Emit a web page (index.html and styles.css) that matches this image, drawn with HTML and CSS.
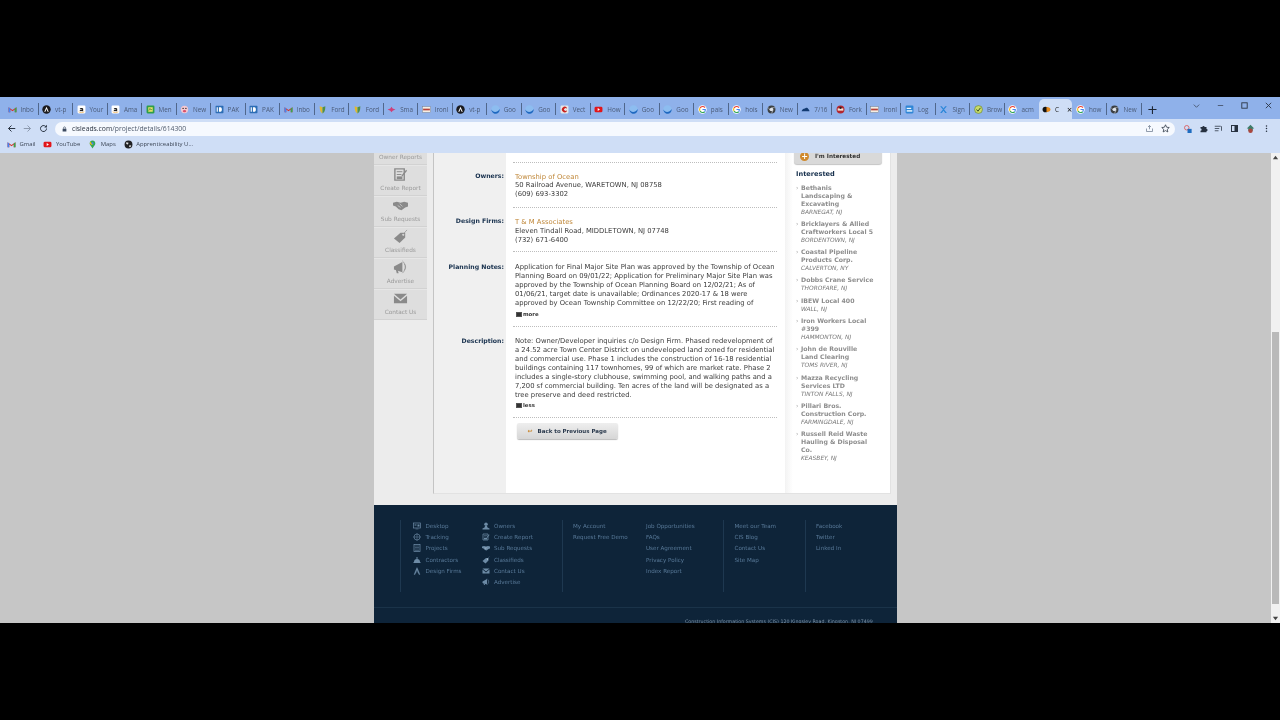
FILE: index.html
```html
<!DOCTYPE html>
<html lang="en">
<head>
<meta charset="utf-8">
<title>CIS project details</title>
<link rel="stylesheet" href="styles.css">
</head>
<body>
<svg class="defs" xmlns="http://www.w3.org/2000/svg">
  <symbol id="gmail" viewBox="0 0 16 16"><path d="M1 13V4l7 5 7-5v9h-3V8l-4 3-4-3v5z" fill="#d93025"/><path d="M1 13V4l3 2v7z" fill="#4285f4"/><path d="M15 13V4l-3 2v7z" fill="#34a853"/></symbol>
  <symbol id="ang" viewBox="0 0 16 16"><circle cx="8" cy="8" r="7.5" fill="#1b1b1f"/><path d="M8 3l4 9h-2L8 7l-2 5H4z" fill="#fff"/></symbol>
  <symbol id="amz" viewBox="0 0 16 16"><rect x="1" y="1" width="14" height="14" rx="2" fill="#fff"/><path d="M5 7c0-2 6-2 6 0v4H9V10c-2 2-5 1-4-1 1-1 3-1 4-1V7H5z" fill="#222"/><path d="M3 12c3 2 7 2 10 0" stroke="#f09a1a" fill="none"/></symbol>
  <symbol id="men" viewBox="0 0 16 16"><rect x="1" y="1" width="14" height="14" rx="2" fill="#2e9e48"/><rect x="4" y="4" width="8" height="8" fill="#e8e36a"/><path d="M5 10l2-4 2 3 2-2" stroke="#1c6a30" fill="none"/></symbol>
  <symbol id="pig" viewBox="0 0 16 16"><circle cx="8" cy="8" r="6.5" fill="#f3c7d0"/><circle cx="5.5" cy="6" r="1.2" fill="#222"/><circle cx="10.5" cy="6" r="1.2" fill="#222"/><ellipse cx="8" cy="11" rx="3" ry="2" fill="#d8506a"/></symbol>
  <symbol id="id" viewBox="0 0 16 16"><rect x="1" y="1.5" width="14" height="13" rx="1" fill="#2c6db5"/><rect x="3" y="4" width="2" height="8" fill="#fff"/><path d="M7 4h3c3 0 3 8 0 8H7z" fill="#fff"/></symbol>
  <symbol id="shield" viewBox="0 0 16 16"><path d="M3 2l5 2v11C5 13 3 10 3 2z" fill="#e2b92e"/><path d="M13 2L8 4v11c3-2 5-5 5-13z" fill="#4f8f4a"/></symbol>
  <symbol id="sma" viewBox="0 0 16 16"><path d="M1 8l5-2 2-3 2 3 5 2-5 2-2 3-2-3z" fill="#cf3f77"/></symbol>
  <symbol id="flag" viewBox="0 0 16 16"><rect x="1" y="3" width="14" height="10" fill="#f4efe4" stroke="#777" stroke-width=".7"/><rect x="2" y="6.5" width="12" height="3" fill="#b8413a"/></symbol>
  <symbol id="globe" viewBox="0 0 16 16"><circle cx="8" cy="8" r="7.5" fill="#8dbdf0"/><path d="M.5 8c3 6 11 6 15-1 0 6-4 8.500-7.500 8.500S.5 12 .5 8z" fill="#1f68c0"/></symbol>
  <symbol id="vec" viewBox="0 0 16 16"><rect x="1" y="1" width="14" height="14" rx="2" fill="#e7e7e7"/><path d="M12 4.500A5 5 0 1 0 12 11.500V9A2.500 2.500 0 1 1 12 7z" fill="#c9211e"/></symbol>
  <symbol id="yt" viewBox="0 0 16 16"><rect x="1" y="3" width="14" height="10" rx="2.500" fill="#e1161b"/><path d="M6.500 5.500l4 2.500-4 2.500z" fill="#fff"/></symbol>
  <symbol id="goog" viewBox="0 0 16 16"><circle cx="8" cy="8" r="7.500" fill="#fff"/><path d="M12.500 4.500A5.500 5.500 0 0 0 3.500 5.500" stroke="#ea4335" stroke-width="2" fill="none"/><path d="M3.500 5.500a5.500 5.500 0 0 0 0 5" stroke="#fbbc05" stroke-width="2" fill="none"/><path d="M3.500 10.500a5.500 5.500 0 0 0 8.500 1.500" stroke="#34a853" stroke-width="2" fill="none"/><path d="M8 8h5c0 2-.5 3-1 4" stroke="#4285f4" stroke-width="2" fill="none"/></symbol>
  <symbol id="chrome" viewBox="0 0 16 16"><circle cx="8" cy="8" r="7" fill="#3c4043"/><circle cx="8" cy="8" r="3.200" fill="#dfe3ea"/><path d="M8 4.800h6M5.200 9.600L2.500 4.500M10.800 9.600L8 15" stroke="#dfe3ea"/></symbol>
  <symbol id="cloud" viewBox="0 0 16 16"><path d="M1 11c1-3 3-5 6-5 2-2 5-1 6 1 1 1 2 2 2 4z" fill="#123a72"/></symbol>
  <symbol id="fork" viewBox="0 0 16 16"><circle cx="8" cy="8" r="7" fill="#b3262e"/><rect x="3" y="6" width="10" height="4" fill="#f0e4d8"/><circle cx="8" cy="5" r="2" fill="#222"/></symbol>
  <symbol id="log" viewBox="0 0 16 16"><rect x="1" y="1" width="14" height="14" rx="2" fill="#2f86d6"/><rect x="3" y="5" width="8" height="2" fill="#fff"/><rect x="3" y="9" width="10" height="3" fill="#cfe6fa"/></symbol>
  <symbol id="x" viewBox="0 0 16 16"><path d="M2 2l5 6-5 6h3l3-4 3 4h3L9 8l5-6h-3L8 6 5 2z" fill="#2a86d8"/></symbol>
  <symbol id="brow" viewBox="0 0 16 16"><circle cx="8" cy="8" r="7" fill="#c9dc6a" stroke="#5b7b2e"/><path d="M4.500 8l2.500 3 4.500-6" stroke="#24401c" stroke-width="1.600" fill="none"/></symbol>
  <symbol id="cis" viewBox="0 0 16 16"><circle cx="6" cy="8" r="5" fill="#111"/><path d="M8 3.500c5 0 7 2 7 4.500s-2 4.500-7 4.500z" fill="#e88c1d"/></symbol>
  <symbol id="maps" viewBox="0 0 16 16"><path d="M8 1c3 0 5 2 5 5 0 3-3 5-5 9-2-4-5-6-5-9 0-3 2-5 5-5z" fill="#34a853"/><path d="M4 3l5 5-3 1-3-3z" fill="#fbbc05"/><circle cx="8" cy="6" r="1.800" fill="#4285f4"/></symbol>
  <symbol id="earth" viewBox="0 0 16 16"><circle cx="8" cy="8" r="7" fill="#202124"/><path d="M4 4l4 1-1 3-3-1zM10 9l3 1-2 3-2-1z" fill="#e8e8e8"/></symbol>
  <symbol id="report" viewBox="0 0 16 16"><path d="M2 2h10v12H2z" fill="none" stroke="currentColor" stroke-width="1.500"/><path d="M4 5h6M4 8h5" stroke="currentColor"/><rect x="4" y="10" width="6" height="3" fill="currentColor"/><path d="M9 9l5-6 1 1-5 6z" fill="currentColor"/></symbol>
  <symbol id="hands" viewBox="0 0 16 16"><path d="M0 5l4-1 4 1 4-1 4 1v4l-3 1-4 3-3-1-3-3-3-1z" fill="currentColor"/><path d="M5 8l3 2M7 6l3 3" stroke="#fff" stroke-width=".5"/></symbol>
  <symbol id="tag" viewBox="0 0 16 16"><path d="M1 10l7-6h5v5l-6 6z" fill="currentColor"/><circle cx="11" cy="6" r="1" fill="#fff"/><path d="M11 6c1-2 2-3 4-5" stroke="currentColor" fill="none" stroke-width=".7"/></symbol>
  <symbol id="mega" viewBox="0 0 16 16"><path d="M1 7l9-5v11L1 10z" fill="currentColor"/><path d="M3 10l1 4h2l-1-3.500" fill="currentColor"/><path d="M12 4c2 2 2 5 0 7M10 1c4 3 4 10 0 13" stroke="currentColor" fill="none" stroke-width=".7"/></symbol>
  <symbol id="mail" viewBox="0 0 16 16"><path d="M1 3h14L8 9z" fill="currentColor"/><path d="M1 5l7 6 7-6v8H1z" fill="currentColor"/></symbol>
  <symbol id="desk" viewBox="0 0 16 16"><rect x="1" y="2" width="14" height="10" fill="none" stroke="currentColor" stroke-width="1.400"/><path d="M3 5h4v2H3zM9 5h4v4H9z" fill="currentColor"/><path d="M5 14h6" stroke="currentColor"/></symbol>
  <symbol id="target" viewBox="0 0 16 16"><circle cx="8" cy="8" r="6" fill="none" stroke="currentColor" stroke-width="1.300"/><path d="M8 0v16M0 8h16" stroke="currentColor"/></symbol>
  <symbol id="proj" viewBox="0 0 16 16"><rect x="2" y="1" width="12" height="14" fill="none" stroke="currentColor" stroke-width="1.500"/><path d="M4 4h8M4 7h8M4 10h8M4 13h8" stroke="currentColor"/></symbol>
  <symbol id="contr" viewBox="0 0 16 16"><path d="M2 12a6 6 0 0 1 12 0z" fill="currentColor"/><rect x="1" y="12" width="14" height="2" fill="currentColor"/><rect x="7" y="2" width="2" height="5" fill="currentColor"/></symbol>
  <symbol id="comp" viewBox="0 0 16 16"><path d="M8 1l1.500 3L14 15h-2L8 6l-4 9H2L6.500 4zM4 10h8" stroke="currentColor" fill="currentColor" stroke-width=".6"/></symbol>
  <symbol id="person" viewBox="0 0 16 16"><circle cx="8" cy="4.500" r="3.500" fill="currentColor"/><path d="M6 8h4l1 3 4 2v2H1v-2l4-2z" fill="currentColor"/></symbol>
</svg>

<div class="letterbox"></div>
<div class="browser">
  <div class="tabstrip">
    <div class="tab"><svg class="fav"><use href="#gmail"/></svg><span>Inbo</span></div>
    <div class="tab"><svg class="fav"><use href="#ang"/></svg><span>vt-p</span></div>
    <div class="tab"><svg class="fav"><use href="#amz"/></svg><span>Your</span></div>
    <div class="tab"><svg class="fav"><use href="#amz"/></svg><span>Ama</span></div>
    <div class="tab"><svg class="fav"><use href="#men"/></svg><span>Men</span></div>
    <div class="tab"><svg class="fav"><use href="#pig"/></svg><span>New</span></div>
    <div class="tab"><svg class="fav"><use href="#id"/></svg><span>PAK</span></div>
    <div class="tab"><svg class="fav"><use href="#id"/></svg><span>PAK</span></div>
    <div class="tab"><svg class="fav"><use href="#gmail"/></svg><span>Inbo</span></div>
    <div class="tab"><svg class="fav"><use href="#shield"/></svg><span>Ford</span></div>
    <div class="tab"><svg class="fav"><use href="#shield"/></svg><span>Ford</span></div>
    <div class="tab"><svg class="fav"><use href="#sma"/></svg><span>Sma</span></div>
    <div class="tab"><svg class="fav"><use href="#flag"/></svg><span>IronI</span></div>
    <div class="tab"><svg class="fav"><use href="#ang"/></svg><span>vt-p</span></div>
    <div class="tab"><svg class="fav"><use href="#globe"/></svg><span>Goo</span></div>
    <div class="tab"><svg class="fav"><use href="#globe"/></svg><span>Goo</span></div>
    <div class="tab"><svg class="fav"><use href="#vec"/></svg><span>Vect</span></div>
    <div class="tab"><svg class="fav"><use href="#yt"/></svg><span>How</span></div>
    <div class="tab"><svg class="fav"><use href="#globe"/></svg><span>Goo</span></div>
    <div class="tab"><svg class="fav"><use href="#globe"/></svg><span>Goo</span></div>
    <div class="tab"><svg class="fav"><use href="#goog"/></svg><span>pais</span></div>
    <div class="tab"><svg class="fav"><use href="#goog"/></svg><span>hois</span></div>
    <div class="tab"><svg class="fav"><use href="#chrome"/></svg><span>New</span></div>
    <div class="tab"><svg class="fav"><use href="#cloud"/></svg><span>7/16</span></div>
    <div class="tab"><svg class="fav"><use href="#fork"/></svg><span>Fork</span></div>
    <div class="tab"><svg class="fav"><use href="#flag"/></svg><span>IronI</span></div>
    <div class="tab"><svg class="fav"><use href="#log"/></svg><span>Log</span></div>
    <div class="tab"><svg class="fav"><use href="#x"/></svg><span>Sign</span></div>
    <div class="tab"><svg class="fav"><use href="#brow"/></svg><span>Brow</span></div>
    <div class="tab tab-plain"><svg class="fav"><use href="#goog"/></svg><span>acm</span></div>
    <div class="tab tab-active"><svg class="fav"><use href="#cis"/></svg><span>C</span><b class="tab-close">×</b></div>
    <div class="tab"><svg class="fav"><use href="#goog"/></svg><span>how</span></div>
    <div class="tab"><svg class="fav"><use href="#chrome"/></svg><span>New</span></div>
    <div class="new-tab">+</div>
    <div class="window-controls">
      <svg class="win-btn" viewBox="0 0 10 10"><path d="M2 4l3 3 3-3" fill="none" stroke="#47566f"/></svg>
      <svg class="win-btn" viewBox="0 0 10 10"><path d="M2 5h6" stroke="#47566f"/></svg>
      <svg class="win-btn" viewBox="0 0 10 10"><rect x="2" y="2" width="6" height="6" fill="none" stroke="#2b3646"/></svg>
      <svg class="win-btn" viewBox="0 0 10 10"><path d="M2 2l6 6M8 2l-6 6" stroke="#2b3646"/></svg>
    </div>
  </div>

  <div class="toolbar">
    <svg class="nav-btn" viewBox="0 0 12 12"><path d="M11 6H2M6 2L2 6l4 4" fill="none" stroke="#26303f" stroke-width="1.300"/></svg>
    <svg class="nav-btn" viewBox="0 0 12 12"><path d="M1 6h9M6 2l4 4-4 4" fill="none" stroke="#8b98ad" stroke-width="1.300"/></svg>
    <svg class="nav-btn" viewBox="0 0 12 12"><path d="M10 6a4 4 0 1 1-1.200-2.800" fill="none" stroke="#26303f" stroke-width="1.300"/><path d="M10.500 1v3.500H7z" fill="#26303f"/></svg>
    <div class="omnibox">
      <svg class="lock" viewBox="0 0 8 8"><rect x="1" y="3.500" width="6" height="4.500" fill="#3c4a60"/><path d="M2.500 3.500V2a1.500 1.500 0 0 1 3 0v1.500" fill="none" stroke="#3c4a60"/></svg>
      <span class="url"><span class="url-host">cisleads.com</span>/project/details/614300</span>
      <svg class="omni-icon" viewBox="0 0 12 12"><path d="M2 6v4h8V6M6 7V2M4 4l2-2 2 2" fill="none" stroke="#6f7c90"/></svg>
      <svg class="omni-icon" viewBox="0 0 12 12"><path d="M6 1l1.500 3.300 3.500.4-2.600 2.400.7 3.500L6 8.800 2.900 10.600l.7-3.500L1 4.700l3.500-.4z" fill="none" stroke="#26303f"/></svg>
    </div>
    <div class="extensions">
      <svg class="ext" viewBox="0 0 12 12"><circle cx="5" cy="5" r="3" fill="none" stroke="#d9656a" stroke-width="1.300"/><rect x="6" y="6.500" width="5.500" height="5.500" fill="#1e6cc0"/></svg>
      <svg class="ext" viewBox="0 0 12 12"><path d="M2 4h2.500a1.500 1.500 0 0 1 3 0H10v2.500a1.500 1.500 0 0 1 0 3V11H2V9a1.500 1.500 0 0 0 0-3z" fill="#26303f"/></svg>
      <svg class="ext" viewBox="0 0 12 12"><path d="M1 3h8M1 6h6M1 9h5M10 3v6" stroke="#26303f" fill="none"/></svg>
      <svg class="ext" viewBox="0 0 12 12"><rect x="2" y="2" width="8" height="8" fill="none" stroke="#26303f" stroke-width="1.300"/><rect x="6" y="2" width="4" height="8" fill="#26303f"/></svg>
      <svg class="ext" viewBox="0 0 12 12"><path d="M6 1l5 5H9v3H3V6H1z" fill="#3d7d6a"/><circle cx="6" cy="9" r="3" fill="#a9473f"/></svg>
      <svg class="ext" viewBox="0 0 12 12"><circle cx="6" cy="2.500" r="1" fill="#26303f"/><circle cx="6" cy="6" r="1" fill="#26303f"/><circle cx="6" cy="9.500" r="1" fill="#26303f"/></svg>
    </div>
  </div>

  <div class="bookmarks">
    <div class="bookmark"><svg class="fav"><use href="#gmail"/></svg>Gmail</div>
    <div class="bookmark"><svg class="fav"><use href="#yt"/></svg>YouTube</div>
    <div class="bookmark"><svg class="fav"><use href="#maps"/></svg>Maps</div>
    <div class="bookmark"><svg class="fav"><use href="#earth"/></svg>Apprenticeability U...</div>
  </div>

  <div class="viewport">
    <div class="page">
      <div class="sheet">
        <div class="sheet-body">
          <nav class="side-nav">
            <a class="side-item"><span class="side-label">Owner Reports</span></a>
            <a class="side-item"><svg class="side-icon"><use href="#report"/></svg><span class="side-label">Create Report</span></a>
            <a class="side-item"><svg class="side-icon"><use href="#hands"/></svg><span class="side-label">Sub Requests</span></a>
            <a class="side-item"><svg class="side-icon"><use href="#tag"/></svg><span class="side-label">Classifieds</span></a>
            <a class="side-item"><svg class="side-icon"><use href="#mega"/></svg><span class="side-label">Advertise</span></a>
            <a class="side-item"><svg class="side-icon"><use href="#mail"/></svg><span class="side-label">Contact Us</span></a>
          </nav>
          <div class="panel">
            <div class="details">
              <div class="row">
                <div class="row-label">Owners:</div>
                <div class="row-value">
                  <a class="firm">Township of Ocean</a><br>
                  50 Railroad Avenue, WARETOWN, NJ 08758<br>
                  (609) 693-3302
                </div>
              </div>
              <div class="row row-design">
                <div class="row-label">Design Firms:</div>
                <div class="row-value">
                  <a class="firm">T &amp; M Associates</a><br>
                  Eleven Tindall Road, MIDDLETOWN, NJ 07748<br>
                  (732) 671-6400
                </div>
              </div>
              <div class="row row-notes">
                <div class="row-label">Planning Notes:</div>
                <div class="row-value">
                  <p class="note note-clipped">Application for Final Major Site Plan was approved by the Township of Ocean<br>
                  Planning Board on 09/01/22; Application for Preliminary Major Site Plan was<br>
                  approved by the Township of Ocean Planning Board on 12/02/21; As of<br>
                  01/06/21, target date is unavailable; Ordinances 2020-17 &amp; 18 were<br>
                  approved by Ocean Township Committee on 12/22/20; First reading of</p>
                  <a class="toggle"><i class="toggle-box"></i>more</a>
                </div>
              </div>
              <div class="row row-desc">
                <div class="row-label">Description:</div>
                <div class="row-value">
                  <p class="note">Note: Owner/Developer inquiries c/o Design Firm. Phased redevelopment of<br>
                  a 24.52 acre Town Center District on undeveloped land zoned for residential<br>
                  and commercial use. Phase 1 includes the construction of 16-18 residential<br>
                  buildings containing 117 townhomes, 99 of which are market rate. Phase 2<br>
                  includes a single-story clubhouse, swimming pool, and walking paths and a<br>
                  7,200 sf commercial building. Ten acres of the land will be designated as a<br>
                  tree preserve and deed restricted.</p>
                  <a class="toggle"><i class="toggle-box"></i>less</a>
                </div>
              </div>
              <div class="row row-last">
                <div class="row-label"></div>
                <div class="row-value">
                  <a class="back-btn"><span class="back-arrow">↩</span>Back to Previous Page</a>
                </div>
              </div>
            </div>
            <aside class="interested">
              <a class="interest-btn"><i class="interest-dot">+</i>I'm Interested</a>
              <h3 class="interest-title">Interested</h3>
              <ul class="interest-list">
                <li>Bethanis<br>Landscaping &amp;<br>Excavating<em>BARNEGAT, NJ</em></li>
                <li>Bricklayers &amp; Allied<br>Craftworkers Local 5<em>BORDENTOWN, NJ</em></li>
                <li>Coastal Pipeline<br>Products Corp.<em>CALVERTON, NY</em></li>
                <li>Dobbs Crane Service<em>THOROFARE, NJ</em></li>
                <li>IBEW Local 400<em>WALL, NJ</em></li>
                <li>Iron Workers Local<br>#399<em>HAMMONTON, NJ</em></li>
                <li>John de Rouville<br>Land Clearing<em>TOMS RIVER, NJ</em></li>
                <li>Mazza Recycling<br>Services LTD<em>TINTON FALLS, NJ</em></li>
                <li>Pillari Bros.<br>Construction Corp.<em>FARMINGDALE, NJ</em></li>
                <li>Russell Reid Waste<br>Hauling &amp; Disposal<br>Co.<em>KEASBEY, NJ</em></li>
              </ul>
            </aside>
          </div>
        </div>
        <footer class="footer">
          <div class="foot-cols">
            <ul class="foot-col foot-col-a">
              <li><svg class="foot-icon"><use href="#desk"/></svg>Desktop</li>
              <li><svg class="foot-icon"><use href="#target"/></svg>Tracking</li>
              <li><svg class="foot-icon"><use href="#proj"/></svg>Projects</li>
              <li><svg class="foot-icon"><use href="#contr"/></svg>Contractors</li>
              <li><svg class="foot-icon"><use href="#comp"/></svg>Design Firms</li>
            </ul>
            <ul class="foot-col foot-col-b">
              <li><svg class="foot-icon"><use href="#person"/></svg>Owners</li>
              <li><svg class="foot-icon"><use href="#report"/></svg>Create Report</li>
              <li><svg class="foot-icon"><use href="#hands"/></svg>Sub Requests</li>
              <li><svg class="foot-icon"><use href="#tag"/></svg>Classifieds</li>
              <li><svg class="foot-icon"><use href="#mail"/></svg>Contact Us</li>
              <li><svg class="foot-icon"><use href="#mega"/></svg>Advertise</li>
            </ul>
            <ul class="foot-col foot-col-c">
              <li>My Account</li>
              <li>Request Free Demo</li>
            </ul>
            <ul class="foot-col foot-col-d">
              <li>Job Opportunities</li>
              <li>FAQs</li>
              <li>User Agreement</li>
              <li>Privacy Policy</li>
              <li>Index Report</li>
            </ul>
            <ul class="foot-col foot-col-e">
              <li>Meet our Team</li>
              <li>CIS Blog</li>
              <li>Contact Us</li>
              <li>Site Map</li>
            </ul>
            <ul class="foot-col foot-col-f">
              <li>Facebook</li>
              <li>Twitter</li>
              <li>Linked In</li>
            </ul>
          </div>
          <p class="copyright">Construction Information Systems (CIS) 120 Kingsley Road, Kingston, NJ 07499</p>
        </footer>
      </div>
    </div>
    <div class="scrollbar">
      <svg class="scroll-arrow" viewBox="0 0 8 8"><path d="M1 6l3-4 3 4z" fill="#444"/></svg>
      <div class="scroll-track"><div class="scroll-thumb"></div></div>
      <svg class="scroll-arrow" viewBox="0 0 8 8"><path d="M1 2l3 4 3-4z" fill="#444"/></svg>
    </div>
  </div>
</div>
<div class="letterbox-bottom"></div>
</body>
</html>
```

FILE: styles.css
```css
* { box-sizing: border-box; }
html, body { margin: 0; padding: 0; height: 720px; overflow: hidden; background: #000; }
body { font-family: "DejaVu Sans", Verdana, sans-serif; font-size: 6.2px; color: #333; }
.defs { display: none; }
.letterbox { height: 97px; background: #000; }
.letterbox-bottom { height: 97px; background: #000; }

.browser { height: 526px; display: flex; flex-direction: column; overflow: hidden; filter: blur(.35px); }

/* tab strip */
.tabstrip { height: 22px; flex: none; display: flex; align-items: center; padding: 2px 0 0 4px; background: #8fb1ea; font-family: "Open Sans", sans-serif; font-size: 6.3px; color: #4a5b78; }
.tab { width: 34.52px; height: 20px; flex: none; display: flex; align-items: center; gap: 4px; padding-left: 3.5px; overflow: hidden; border-right: 1px solid #5f7fb0; border-image: linear-gradient(#8fb1ea 25%, #50678c 25%, #50678c 75%, #8fb1ea 75%) 1; }
.tab span { white-space: nowrap; }
.fav { width: 9px; height: 9px; flex: none; }
.tab-plain { border-image: none; border-right: 1px solid #8fb1ea; }
.tab-active { background: #cfdef6; border: 0; border-image: none; border-radius: 5px 5px 0 0; color: #222; padding-left: 2.5px; width: 33px; }
.tab-close { font-size: 9px; line-height: 1; color: #111; margin-left: 4px; font-weight: 400; }
.new-tab { width: 22px; flex: none; font-size: 13px; line-height: 1; color: #1c2533; text-align: center; font-family: "DejaVu Sans", sans-serif; }
.window-controls { margin-left: auto; height: 20px; display: flex; align-items: flex-start; padding-top: 2px; }
.win-btn { width: 9px; height: 9px; margin: 0 7.5px; flex: none; }

/* toolbar */
.toolbar { height: 18px; flex: none; display: flex; align-items: center; padding: 1px 0 0 6.5px; background: #cfdef6; }
.nav-btn { width: 9px; height: 9px; flex: none; margin-right: 7.3px; }
.omnibox { width: 1120px; height: 14px; margin-left: -.5px; flex: none; display: flex; align-items: center; padding-left: 7px; background: #f6f9fe; border-radius: 7px; font-family: "Open Sans", sans-serif; font-size: 6.8px; color: #4f5b6d; }
.lock { width: 5px; height: 6px; flex: none; margin-right: 5px; }
.url { flex: 1; white-space: nowrap; }
.url-host { color: #2c3543; }
.omni-icon { width: 9px; height: 9px; flex: none; margin-right: 7px; }
.omni-icon:last-child { margin-right: 5px; }
.extensions { display: flex; align-items: center; margin-left: 8px; flex: none; }
.ext { width: 9px; height: 9px; margin-right: 6.8px; flex: none; }

/* bookmarks */
.bookmarks { height: 16px; flex: none; display: flex; align-items: center; padding: 0 0 2px 7px; background: #cfdef6; font-family: "Open Sans", sans-serif; font-size: 5.9px; color: #3c4656; gap: 8px; }
.bookmark { display: flex; align-items: center; gap: 3.5px; white-space: nowrap; }

/* viewport */
.viewport { flex: 1; min-height: 0; display: flex; background: #c6c6c6; }
.page { flex: 1; min-width: 0; overflow: hidden; display: flex; justify-content: center; }
.sheet { width: 523px; flex: none; display: flex; flex-direction: column; }
.sheet-body { height: 352px; flex: none; display: flex; padding: 0 6px 11px 0; background: #ececec; }

/* side nav */
.side-nav { width: 59px; flex: none; margin-top: -19px; }
.side-item { width: 53px; height: 31px; display: flex; flex-direction: column; align-items: center; justify-content: flex-end; padding-bottom: 3px; background: #dedede; border-bottom: 1px solid #d2d2d2; border-top: 1px solid #e6e6e6; color: #8c8c8c; }
.side-icon { width: 15px; height: 15px; margin-bottom: 3px; color: #8a8a8a; }
.side-label { font-size: 5.8px; line-height: 7px; color: #9a9a9a; white-space: nowrap; }

/* panel */
.panel { flex: 1; min-width: 0; display: flex; background: #fff; border: 1px solid #e2e2e2; border-left-color: #c4c4c4; border-top: 0; }
.details { width: 351px; flex: none; padding-top: 9px; background: linear-gradient(to right, #f0f0f0 72px, #fff 72px); }
.row { display: flex; }
.row-label { width: 70px; flex: none; padding-top: 10px; text-align: right; font-weight: 700; color: #17304d; line-height: 8.9px; }
.row-value { width: 264px; margin-left: 9px; padding: 9.5px 2px 7.5px; flex: none; border-top: 1px dotted #bdbdbd; line-height: 8.9px; font-size: 6.8px; color: #3b3b3b; white-space: nowrap; }
.row-design .row-value { padding-top: 10.5px; padding-bottom: 6.5px; }
.row-design .row-label { padding-top: 10.5px; }
.row-notes .row-label { padding-top: 11.5px; }
.row-desc .row-label { padding-top: 11px; }
.row-desc .row-value { padding-top: 10px; padding-bottom: 7px; }
.row-last .row-value { padding: 5px 4px 0; }
.firm { color: #c0883a; }
.note { margin: 0; }
.note-clipped { margin: 1px 0 2.5px; }
.toggle { display: flex; align-items: center; height: 9px; margin-top: 1px; padding-left: 1px; font-weight: 700; font-size: 5.4px; color: #333; }
.toggle-box { width: 6px; height: 5.5px; margin-right: 1px; background: #333; border: 1px solid #555; }
.back-btn { display: flex; align-items: center; width: 101px; height: 16px; padding: 1px 0 0 10.5px; border-radius: 2px; font-weight: 700; font-size: 5.5px; color: #2b3a4d; white-space: nowrap; background: linear-gradient(#eeeeee, #d6d6d6); box-shadow: 0 1px 1px #bbb; }
.back-arrow { color: #c8852b; margin-right: 5px; font-size: 6px; }

/* interested */
.interested { flex: 1; min-width: 0; padding-left: 11px; background: linear-gradient(to right, #f3f3f3, #fff 8px); }
.interest-btn { display: flex; align-items: center; width: 88px; height: 17px; margin: -6px 0 0 -2px; padding: 1px 0 0 6px; border-radius: 0 0 3px 3px; background: #d9d9d9; box-shadow: 0 1px 1px #c4c4c4; font-weight: 700; font-size: 5.7px; color: #333; }
.interest-dot { width: 9px; height: 9px; margin-right: 6px; border-radius: 50%; background: #d08a2e; color: #fff; text-align: center; line-height: 9px; font-style: normal; font-size: 8px; }
.interest-title { margin: 6px 0 0; height: 9.5px; font-size: 6.6px; line-height: 8px; font-weight: 700; color: #17304d; }
.interest-list { list-style: none; margin: 0; padding: 4px 0 0 5px; }
.interest-list li { position: relative; margin-bottom: 4.3px; line-height: 8px; font-weight: 700; font-size: 6.2px; color: #8d8d8d; white-space: nowrap; }
.interest-list li::before { content: "›"; position: absolute; left: -5px; top: 0; font-weight: 400; color: #aaa; }
.interest-list em { display: block; font-weight: 400; color: #777; font-size: 5.9px; }

/* footer */
.footer { height: 118px; flex: none; background: #0e2439; color: #587998; font-size: 5.6px; overflow: hidden; }
.foot-cols { height: 103px; display: flex; padding-top: 15px; border-bottom: 1px solid #1a3349; }
.foot-col { list-style: none; margin: 0; height: 72px; padding: 0; white-space: nowrap; flex: none; }
.foot-col li { display: flex; align-items: center; height: 11.3px; }
.foot-col-a { width: 82px; margin-left: 26px; padding-left: 12px; border-left: 1px solid #1e3850; }
.foot-col-a .foot-icon { margin-right: 4.5px; }
.foot-col-b { width: 80px; }
.foot-col-b .foot-icon { margin-right: 4px; }
.foot-col-c { width: 84px; padding-left: 10px; border-left: 1px solid #1e3850; }
.foot-col-d { width: 77px; }
.foot-col-e { width: 82px; padding-left: 10.5px; border-left: 1px solid #1e3850; }
.foot-col-f { padding-left: 10px; border-left: 1px solid #1e3850; }
.foot-icon { width: 8px; height: 8px; flex: none; color: #6d8ba6; }
.copyright { margin: 11px 0 0 311px; font-size: 4.75px; line-height: 6px; color: #7d92a6; white-space: nowrap; }

/* scrollbar */
.scrollbar { width: 9px; flex: none; display: flex; flex-direction: column; background: #f1f1f1; }
.scroll-arrow { width: 9px; height: 9px; flex: none; padding: 1px; }
.scroll-track { flex: 1; padding-top: 170px; padding-bottom: 10px; display: flex; }
.scroll-thumb { flex: 1; margin: 0 1px; background: #b9b9b9; }
```
